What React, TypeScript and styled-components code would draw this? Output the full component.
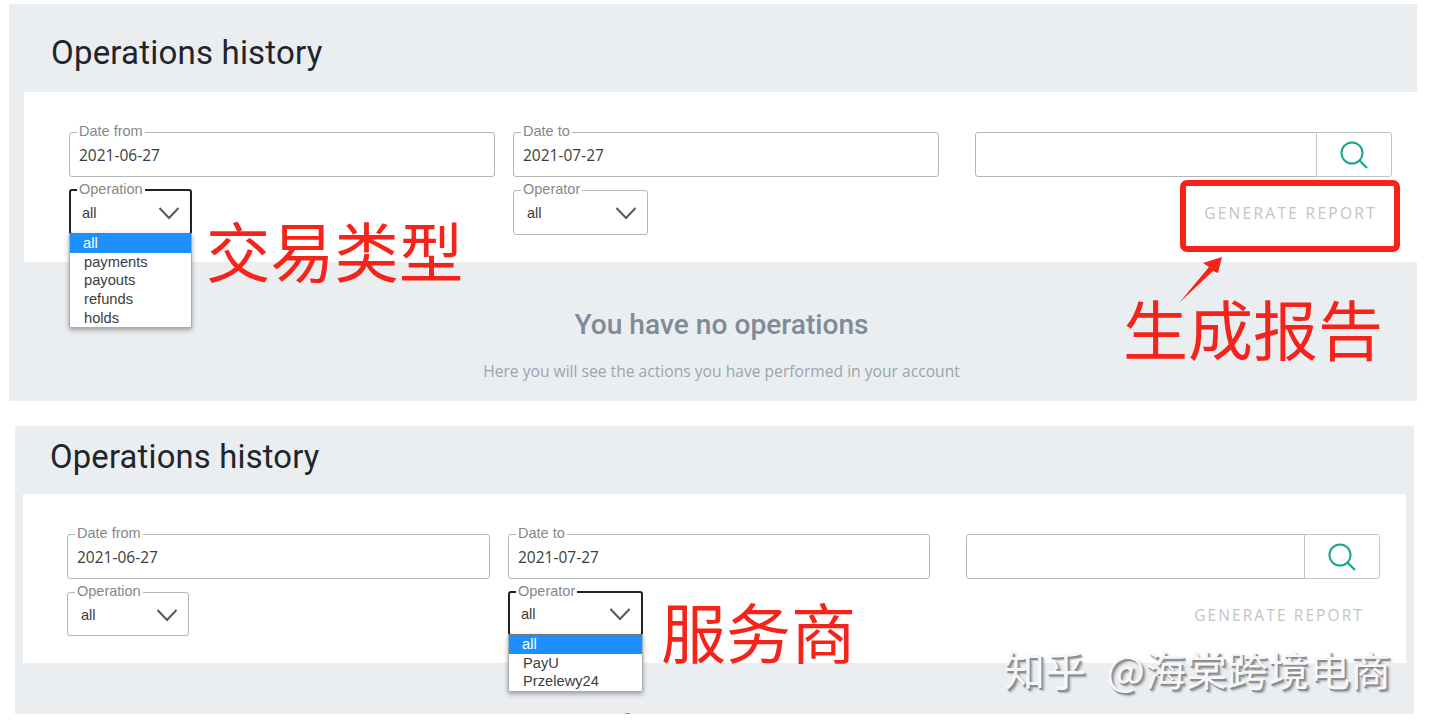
import React from "react";
import styled, { createGlobalStyle } from "styled-components";

const Global = createGlobalStyle`
  html, body { margin: 0; padding: 0; background: #fff; }
  body { font-family: "Open Sans", "Noto Sans", sans-serif; overflow: hidden; }
  #root { width: 1430px; height: 727px; position: relative; overflow: hidden; }
`;

const Page = styled.main`
  position: relative;
  display: flex;
  flex-direction: column;
  gap: 25px;
  padding-top: 4px;
`;

const Panel = styled.section<{ $left: number; $width: number }>`
  margin-left: ${(p) => p.$left}px;
  width: ${(p) => p.$width}px;
  background: #ebeef1;
`;

const Header = styled.header<{ $height: number; $pad: number }>`
  height: ${(p) => p.$height}px;
  padding-left: ${(p) => p.$pad}px;
  box-sizing: border-box;
  display: flex;
  align-items: flex-start;
`;

const Title = styled.h1<{ $top: number; $size: number }>`
  margin: ${(p) => p.$top}px 0 0;
  font: 400 ${(p) => p.$size}px/40px Roboto, sans-serif;
  letter-spacing: 0.2px;
  color: #212529;
`;

const Card = styled.div<{ $left: number; $width: number; $height: number; $pad: number }>`
  margin-left: ${(p) => p.$left}px;
  width: ${(p) => p.$width}px;
  height: ${(p) => p.$height}px;
  box-sizing: border-box;
  padding: 40px 0 0 ${(p) => p.$pad}px;
  background: #fff;
`;

const FilterGrid = styled.div<{ $columns: string; $gap: number }>`
  display: grid;
  grid-template-columns: ${(p) => p.$columns};
  column-gap: ${(p) => p.$gap}px;
  row-gap: 13px;
`;

const Field = styled.fieldset<{ $focused?: boolean; $height?: number }>`
  margin: -8px 0 0;
  height: ${(p) => (p.$height ?? 45) + 8}px;
  min-width: 0;
  box-sizing: border-box;
  padding: 0 9px 6px;
  border: ${(p) => (p.$focused ? "2px solid #222" : "1px solid #b4b6b8")};
  border-radius: 3px;
  display: flex;
  align-items: center;
  justify-content: space-between;
`;

const Legend = styled.legend<{ $focused?: boolean }>`
  position: relative;
  top: -1px;
  margin-left: ${(p) => (p.$focused ? -3 : -2)}px;
  padding: 0 2px;
  font: 400 14.5px/16px "Liberation Sans", Arial, sans-serif;
  color: #85888b;
`;

const DateValue = styled.span`
  font: 400 15.5px/20px "Open Sans", sans-serif;
  color: #3a3d40;
`;

const SearchGroup = styled.div`
  display: flex;
  height: 45px;
  margin-left: 18px;
`;

const SearchInput = styled.div`
  flex: 1;
  border: 1px solid #b4b6b8;
  border-radius: 3px 0 0 3px;
  box-sizing: border-box;
`;

const SearchButton = styled.button`
  width: 76px;
  margin-left: -1px;
  padding: 0;
  background: #fff;
  border: 1px solid #c2c4c6;
  border-radius: 0 3px 3px 0;
  display: flex;
  align-items: center;
  justify-content: center;
`;

const SelectRow = styled.div<{ $width: number }>`
  position: relative;
  width: ${(p) => p.$width}px;
`;

const SelectValue = styled.span<{ $focused: boolean }>`
  margin-left: ${(p) => (p.$focused ? 2 : 4)}px;
  font: 400 14.5px/20px "Liberation Sans", Arial, sans-serif;
  color: #3a3d40;
`;

const ChevronWrap = styled.span`
  display: flex;
  margin-right: 1px;
`;

const Menu = styled.ul<{ $height: number }>`
  position: absolute;
  z-index: 2;
  top: ${(p) => p.$height - 2}px;
  left: 0;
  right: 0;
  margin: 0;
  padding: 0;
  list-style: none;
  background: #fff;
  border: 1px solid #a9abad;
  border-top-color: #777;
  border-radius: 0 0 2px 2px;
  box-shadow: 0 2px 5px rgba(0, 0, 0, 0.35);
`;

const MenuItem = styled.li<{ $selected?: boolean }>`
  height: 18.7px;
  padding-left: ${(p) => (p.$selected ? 13 : 14)}px;
  font: 400 14.7px/18.7px "Liberation Sans", Arial, sans-serif;
  color: ${(p) => (p.$selected ? "#fff" : "#3a3d40")};
  background: ${(p) => (p.$selected ? "#1e8fff" : "transparent")};
`;

const Actions = styled.div<{ $pad: number }>`
  display: flex;
  justify-content: flex-end;
  align-items: center;
  height: 45px;
  padding-right: ${(p) => p.$pad}px;
`;

const GenerateButton = styled.button<{ $spacing: number }>`
  padding: 0;
  background: none;
  border: 0;
  font: 400 15.5px/20px "Open Sans", sans-serif;
  letter-spacing: ${(p) => p.$spacing}px;
  color: #c2c4c6;
`;

const Empty = styled.div<{ $left: number; $height: number }>`
  margin-left: ${(p) => p.$left}px;
  height: ${(p) => p.$height}px;
  padding: 45px 0 0 2px;
  box-sizing: border-box;
  display: flex;
  flex-direction: column;
  align-items: center;
  overflow: hidden;
`;

const EmptyTitle = styled.h2`
  margin: 0;
  font: 500 28.15px/36px Roboto, sans-serif;
  color: #7f8b96;
`;

const EmptyText = styled.p`
  margin: 17px 0 0;
  font: 400 15.63px/22px "Open Sans", sans-serif;
  color: #9ca4ac;
`;

const Note = styled.span<{ $x: number; $y: number; $size?: number }>`
  position: absolute;
  z-index: 3;
  left: ${(p) => p.$x}px;
  top: ${(p) => p.$y}px;
  font: 400 ${(p) => p.$size ?? 65}px/1 "Noto Sans CJK SC", sans-serif;
  color: #f5231a;
  white-space: nowrap;
`;

const Watermark = styled(Note)`
  color: #f6f7f8;
  word-spacing: 11px;
  text-shadow: 1.5px 1.5px 0 #8b8d8f, 3px 3px 2px rgba(90, 90, 90, 0.45);
`;

const Highlight = styled.div`
  position: absolute;
  z-index: 3;
  left: 1180px;
  top: 180px;
  width: 220px;
  height: 72px;
  box-sizing: border-box;
  border: 6px solid #f5231a;
  border-radius: 7px;
`;

const ArrowSvg = styled.svg`
  position: absolute;
  z-index: 3;
  left: 1170px;
  top: 250px;
`;

const StrayMark = styled.span`
  position: absolute;
  left: 625px;
  top: 713px;
  width: 5px;
  height: 1px;
  background: #8d949b;
`;

const Chevron = () => (
  <ChevronWrap>
    <svg width="22" height="14" viewBox="0 0 22 14" fill="none">
      <path d="M1.5 2 L11 12 L20.5 2" stroke="#55595d" strokeWidth="2" />
    </svg>
  </ChevronWrap>
);

const SearchIcon = () => (
  <svg width="30" height="30" viewBox="0 0 30 30" fill="none">
    <circle cx="13" cy="13" r="10.5" stroke="#1aa58c" strokeWidth="2" />
    <path d="M20.5 20.5 L28 28" stroke="#1aa58c" strokeWidth="2.2" />
  </svg>
);

type Filter = {
  label: string;
  width: number;
  height: number;
  options?: string[];
};

const SelectField = ({ label, width, height, options }: Filter) => (
  <SelectRow $width={width}>
    <Field $focused={!!options} $height={height}>
      <Legend $focused={!!options}>{label}</Legend>
      <SelectValue $focused={!!options}>all</SelectValue>
      <Chevron />
    </Field>
    {options && (
      <Menu $height={height}>
        {options.map((o, i) => (
          <MenuItem key={o} $selected={i === 0}>
            {o}
          </MenuItem>
        ))}
      </Menu>
    )}
  </SelectRow>
);

type SectionProps = {
  left: number;
  width: number;
  headerH: number;
  titlePad: number;
  titleTop: number;
  titleSize: number;
  cardLeft: number;
  cardW: number;
  cardH: number;
  cardPad: number;
  columns: string;
  gap: number;
  selectH: number;
  operation: Filter;
  operator: Filter;
  actionPad: number;
  actionSpacing: number;
  emptyH: number;
  showEmpty?: boolean;
};

const Section = (s: SectionProps) => (
  <Panel $left={s.left} $width={s.width}>
    <Header $height={s.headerH} $pad={s.titlePad}>
      <Title $top={s.titleTop} $size={s.titleSize}>Operations history</Title>
    </Header>
    <Card $left={s.cardLeft} $width={s.cardW} $height={s.cardH} $pad={s.cardPad}>
      <FilterGrid $columns={s.columns} $gap={s.gap}>
        <Field>
          <Legend>Date from</Legend>
          <DateValue>2021-06-27</DateValue>
        </Field>
        <Field>
          <Legend>Date to</Legend>
          <DateValue>2021-07-27</DateValue>
        </Field>
        <SearchGroup>
          <SearchInput />
          <SearchButton aria-label="Search">
            <SearchIcon />
          </SearchButton>
        </SearchGroup>
        <SelectField {...s.operation} height={s.selectH} />
        <SelectField {...s.operator} height={s.selectH} />
        <Actions $pad={s.actionPad}>
          <GenerateButton $spacing={s.actionSpacing}>GENERATE REPORT</GenerateButton>
        </Actions>
      </FilterGrid>
    </Card>
    <Empty $left={s.cardLeft} $height={s.emptyH}>
      {s.showEmpty && (
        <>
          <EmptyTitle>You have no operations</EmptyTitle>
          <EmptyText>Here you will see the actions you have performed in your account</EmptyText>
        </>
      )}
    </Empty>
  </Panel>
);

export default function App() {
  return (
    <>
      <Global />
      <Page>
        <Section
          left={9}
          width={1408}
          headerH={88}
          titlePad={42}
          titleTop={29}
          titleSize={33}
          cardLeft={15}
          cardW={1393}
          cardH={170}
          cardPad={45}
          columns="426px 426px 435px"
          gap={18}
          selectH={45}
          operation={{
            label: "Operation",
            width: 123,
            height: 45,
            options: ["all", "payments", "payouts", "refunds", "holds"],
          }}
          operator={{ label: "Operator", width: 135, height: 45 }}
          actionPad={15}
          actionSpacing={2.3}
          emptyH={139}
          showEmpty
        />
        <Section
          left={15}
          width={1399}
          headerH={68}
          titlePad={35}
          titleTop={11}
          titleSize={32.75}
          cardLeft={8}
          cardW={1383}
          cardH={169}
          cardPad={44}
          columns="423px 422px 432px"
          gap={18}
          selectH={44}
          operation={{ label: "Operation", width: 122, height: 44 }}
          operator={{
            label: "Operator",
            width: 135,
            height: 44,
            options: ["all", "PayU", "Przelewy24"],
          }}
          actionPad={16}
          actionSpacing={2.1}
          emptyH={51}
        />
        <Note $x={206} $y={217} $size={64.3}>交易类型</Note>
        <Note $x={1123} $y={295}>生成报告</Note>
        <Note $x={661} $y={598}>服务商</Note>
        <Watermark $x={1004} $y={648} $size={41}>知乎 @海棠跨境电商</Watermark>
        <Highlight />
        <ArrowSvg width="60" height="60" viewBox="1170 250 60 60">
          <polygon points="1222,257 1203,263 1209,267 1179,303 1213,271 1218,273" fill="#f5231a" />
        </ArrowSvg>
        <StrayMark />
      </Page>
    </>
  );
}
